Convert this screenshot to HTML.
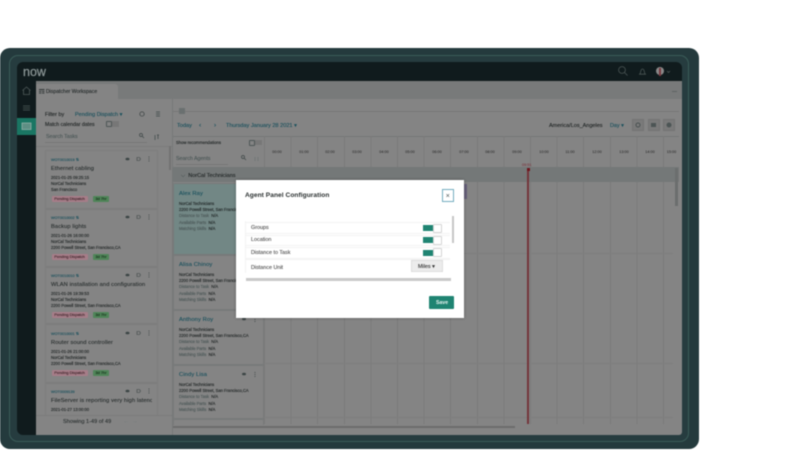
<!DOCTYPE html>
<html><head><meta charset="utf-8">
<style>
html,body{margin:0;padding:0;background:#fff;width:800px;height:450px;overflow:hidden;font-family:"Liberation Sans",sans-serif}
div,span,svg{position:absolute;white-space:nowrap}
#wrap{left:0;top:0;width:800px;height:450px;filter:blur(.4px)}
.t{line-height:8px;color:#1b2020;font-size:4.1px;margin-top:.6px;-webkit-text-stroke:.1px currentColor}
.h{font-size:5.700px;color:#262c2c;letter-spacing:.12px}
.w{font-size:3.800px;color:#174f5c}
.g{color:#4a5656}
.teal{color:#174f5c}
.tag{height:6px;line-height:6px;font-size:3.900px;text-align:center;border-radius:1px;-webkit-text-stroke:.1px currentColor}
.p{background:#a67d88;color:#3a2127}
.q{background:#4f8558;color:#122a16}
.c{left:45px;width:113px;background:#848484;border:1px solid #7d7d7d;box-sizing:border-box}
.a{left:173px;width:91px;border:1px solid #787a7a;box-sizing:border-box;background:#848484}
.n{font-size:5.800px;color:#174f5c;letter-spacing:.1px}
.box{background:#7a7a7a;border:1px solid #737373;box-sizing:border-box;width:12px;height:12px;top:119px}
.hr{font-size:3.800px;color:#222;top:148px;width:26px;text-align:center;line-height:8px}
.row{left:245px;width:205px;background:#fff;border-top:1px solid #f3f3f3;border-bottom:1px solid #f3f3f3;box-sizing:border-box}
.m{font-size:5.400px;color:#4a4a4a;line-height:8px;left:251px;-webkit-text-stroke:.08px currentColor}
.sw{left:423px;width:19px;height:9px}
</style></head>
<body>
<div id="wrap">
<div style="left:0;top:48px;width:699px;height:401px;background:#243a3d;border-radius:10px"></div>
<div style="left:8.500px;top:55px;width:680px;height:386.500px;border:1px solid #3a5c58;border-radius:9px;box-sizing:border-box;background:#263c3f"></div>
<div style="left:17px;top:62px;width:665px;height:373px;background:#101b1d;border-radius:6px"></div>
<div class="t" style="left:23px;top:65px;font-size:12.500px;line-height:12px;color:#8b9696;letter-spacing:0;-webkit-text-stroke:.25px #8b9696">now</div>

<!-- top icons -->
<svg style="left:617px;top:65px" width="60" height="13" fill="none" stroke="#4b5655" stroke-width=".8">
<circle cx="5" cy="5" r="3.400"/><path d="M7.500 7.500l3 3"/>
<path d="M22 9.200h7M23 9c.8-1 .3-5 2.500-5s1.700 4 2.500 5"/>
<circle cx="43" cy="6" r="4" fill="#8a8a8a" stroke="none"/><rect x="42" y="3" width="2" height="8" fill="#7a3a40" stroke="none"/>
<path d="M50 6l1.500 1.500L53 6"/></svg>

<!-- sidebar -->
<div style="left:17px;top:118px;width:19px;height:17px;background:#1a7663"></div>
<svg style="left:17px;top:82px" width="19" height="52" fill="none" stroke="#4f5b5a" stroke-width=".8">
<path d="M5.500 8.500L9.500 5l4 3.500M6.500 8v4.500h6V8"/>
<path d="M6 24h7M6 26h7M6 28h7" stroke="#3e4b49" stroke-width="1"/>
<rect x="5" y="41" width="9" height="6.500" stroke="#8fb0a8" fill="#5e8f84"/></svg>

<!-- content -->
<div style="left:36px;top:81px;width:646px;height:354px;background:#848484;border-radius:0 0 3px 0"></div>
<div style="left:36px;top:81px;width:646px;height:18px;background:#787a7a"></div>
<div style="left:36px;top:84px;width:82px;height:15px;background:#848484;border-radius:0 3px 0 0"></div>
<svg style="left:39px;top:89px" width="6" height="5" fill="#3a4040"><path d="M0 0h5.500v1.200H0zM0 2h2.300v1H0zM3 2h2.500v1H3zM0 3.600h2.300v1H0zM3 3.600h2.500v1H3z"/></svg>
<div class="t" style="left:46px;top:87px;font-size:5.100px;color:#222828">Dispatcher Workspace</div>
<div style="left:672px;top:90.500px;width:5px;height:1px;background:#5f6363"></div>

<!-- left panel -->
<div style="left:172px;top:99px;width:1px;height:336px;background:#767878"></div>
<div class="t" style="left:45px;top:110px;font-size:5.400px">Filter by</div>
<div class="t teal" style="left:75px;top:110px;font-size:5.500px">Pending Dispatch ▾</div>
<svg style="left:136px;top:110px" width="30" height="8" fill="none" stroke="#333b3b" stroke-width=".7">
<circle cx="6" cy="4" r="2.200"/><path d="M20 2h4M20 4h4M20 6h4" stroke="#4b5555" stroke-width=".9"/></svg>
<div class="t" style="left:45px;top:120.500px;font-size:5.200px">Match calendar dates</div>
<div style="left:106px;top:121px;width:13px;height:6px;background:#777;border-radius:1px"></div>
<div style="left:106px;top:120.500px;width:6px;height:6.500px;background:#848484;border:.7px solid #4e5656;box-sizing:border-box;border-radius:1px"></div>
<div class="t g" style="left:46px;top:132px;font-size:5.300px">Search Tasks</div>
<div style="left:45px;top:141.500px;width:102px;height:1px;background:#777"></div>
<svg style="left:138px;top:132px" width="24" height="10" fill="none" stroke="#3c4545" stroke-width=".7">
<circle cx="3" cy="3" r="1.500"/><path d="M4 4l2 2M17 3v5M20 3v4M19 3h2"/></svg>
<div style="left:36px;top:146px;width:136px;height:1px;background:#7b7b7b"></div>
<div style="left:169px;top:146px;width:2px;height:24px;background:#737373"></div>

<div class="c" style="top:150px;height:59px"></div>
<div class="t w" style="left:51px;top:155px">WOT0010019 <span style="position:static">⇅</span></div>
<div class="t h" style="left:51px;top:164px">Ethernet cabling</div>
<div class="t" style="left:51px;top:173px">2021-01-25 09:25:15</div>
<div class="t" style="left:51px;top:179px">NorCal Technicians</div>
<div class="t" style="left:51px;top:185.500px">San Francisco</div>
<div class="tag p" style="left:51.500px;top:196px;width:36px">Pending Dispatch</div>
<div class="tag q" style="left:93px;top:196px;width:16px">3d 7hr</div>

<div class="c" style="top:209px;height:58px"></div>
<div class="t w" style="left:51px;top:213px">WOT0010002 <span style="position:static">⇅</span></div>
<div class="t h" style="left:51px;top:222px">Backup lights</div>
<div class="t" style="left:51px;top:231px">2021-01-26 16:00:00</div>
<div class="t" style="left:51px;top:237px">NorCal Technicians</div>
<div class="t" style="left:51px;top:243.500px">2200 Powell Street, San Francisco,CA</div>
<div class="tag p" style="left:51.500px;top:254px;width:36px">Pending Dispatch</div>
<div class="tag q" style="left:93px;top:254px;width:16px">3d 7hr</div>

<div class="c" style="top:267px;height:57px"></div>
<div class="t w" style="left:51px;top:271px">WOT0010010 <span style="position:static">⇅</span></div>
<div class="t h" style="left:51px;top:280px">WLAN installation and configuration</div>
<div class="t" style="left:51px;top:289px">2021-01-26 19:39:53</div>
<div class="t" style="left:51px;top:295px">NorCal Technicians</div>
<div class="t" style="left:51px;top:301.500px">2200 Powell Street, San Francisco,CA</div>
<div class="tag p" style="left:51.500px;top:312px;width:36px">Pending Dispatch</div>
<div class="tag q" style="left:93px;top:312px;width:16px">3d 7hr</div>

<div class="c" style="top:324px;height:59px"></div>
<div class="t w" style="left:51px;top:329px">WOT0010001 <span style="position:static">⇅</span></div>
<div class="t h" style="left:51px;top:338px">Router sound controller</div>
<div class="t" style="left:51px;top:347px">2021-01-26 21:00:00</div>
<div class="t" style="left:51px;top:353px">NorCal Technicians</div>
<div class="t" style="left:51px;top:359.500px">2200 Powell Street, San Francisco,CA</div>
<div class="tag p" style="left:51.500px;top:370px;width:36px">Pending Dispatch</div>
<div class="tag q" style="left:93px;top:370px;width:16px">3d 7hr</div>

<div class="c" style="top:383px;height:32px;border-bottom:0"></div>
<div class="t w" style="left:51px;top:387px">WOT0009139</div>
<div class="t h" style="left:51px;top:396px;width:101px;overflow:hidden">FileServer is reporting very high latency</div>
<div class="t" style="left:51px;top:405px">2021-01-27 13:00:00</div>

<svg style="left:124px;top:154px" width="30" height="245" fill="#3c4545" stroke="none">
<g id="i"><ellipse cx="3.500" cy="5" rx="2" ry="1.300"/><path d="M13 3.500h2.500l1 1.500-1 1.500H13z" fill="none" stroke="#3c4545" stroke-width=".6"/><rect x="24.500" y="2.500" width=".9" height=".9"/><rect x="24.500" y="4.500" width=".9" height=".9"/><rect x="24.500" y="6.500" width=".9" height=".9"/></g>
<use href="#i" y="58"/><use href="#i" y="116"/><use href="#i" y="174"/><use href="#i" y="232"/></svg>

<div style="left:36px;top:415px;width:136px;height:20px;background:#848484;border-top:1px solid #7b7b7b;box-sizing:border-box"></div>
<div class="t" style="left:63px;top:417px;font-size:5.600px;color:#2a3030">Showing 1-49 of 49</div>
<div class="t" style="left:123px;top:417px;font-size:6.500px;color:#757b7b;-webkit-text-stroke:0">←&nbsp;→</div>

<!-- toolbar -->
<div style="left:173px;top:111px;width:506px;height:1px;background:#777"></div>
<div style="left:179px;top:108px;width:6px;height:6px;background:#6a7070"></div>
<div class="t teal" style="left:177px;top:121px;font-size:5.600px">Today</div>
<div class="t teal" style="left:199px;top:121px;font-size:6.500px">‹</div>
<div class="t teal" style="left:214px;top:121px;font-size:6.500px">›</div>
<div class="t teal" style="left:226px;top:121px;font-size:5.600px">Thursday January 28 2021 ▾</div>
<div class="t" style="left:549px;top:121px;font-size:5.500px">America/Los_Angeles</div>
<div class="t teal" style="left:610px;top:121px;font-size:5.400px">Day ▾</div>
<div class="box" style="left:632px"></div><div class="box" style="left:648px"></div><div class="box" style="left:663px"></div>
<svg style="left:632px;top:119px" width="44" height="12" fill="none" stroke="#3c4545" stroke-width=".8">
<circle cx="6" cy="6" r="2"/><rect x="19" y="4" width="5" height="4" fill="#4c5555" stroke="none"/><circle cx="37" cy="6" r="2.500" fill="#4c5555" stroke="none"/></svg>
<div style="left:173px;top:136px;width:506px;height:1px;background:#757777"></div>

<!-- agents head -->
<div class="t" style="left:176px;top:138px;font-size:4.200px">Show recommendations</div>
<div style="left:249px;top:140px;width:13px;height:5px;background:#777"></div>
<div style="left:249px;top:139.500px;width:6px;height:6px;background:#848484;border:.7px solid #4e5656;box-sizing:border-box;border-radius:1px"></div>
<div class="t g" style="left:176px;top:154px;font-size:5.300px">Search Agents</div>
<div style="left:176px;top:164px;width:52px;height:1px;background:#777"></div>
<svg style="left:240px;top:154px" width="22" height="9" fill="none" stroke="#3c4545" stroke-width=".7">
<circle cx="3" cy="3" r="1.500"/><path d="M4 4l2 2"/><path d="M15 3v4M18 3v4" stroke="#6b7272"/></svg>

<!-- timeline grid -->
<div style="left:264px;top:136px;width:415px;height:288px;background:repeating-linear-gradient(90deg,#7a7a7a 0,#7a7a7a 1px,transparent 1px,transparent 26.600px)"></div>
<div style="left:264px;top:253px;width:409px;height:1px;background:#7e7e7e"></div>
<div style="left:264px;top:363px;width:409px;height:1px;background:#7e7e7e"></div>
<div style="left:264px;top:417px;width:409px;height:1px;background:#7e7e7e"></div>

<div class="hr" style="left:264px">00:00</div><div class="hr" style="left:291px">01:00</div><div class="hr" style="left:317px">02:00</div><div class="hr" style="left:344px">03:00</div><div class="hr" style="left:371px">04:00</div><div class="hr" style="left:397px">05:00</div><div class="hr" style="left:424px">06:00</div><div class="hr" style="left:451px">07:00</div><div class="hr" style="left:477px">08:00</div><div class="hr" style="left:504px">09:00</div><div class="hr" style="left:531px">10:00</div><div class="hr" style="left:557px">11:00</div><div class="hr" style="left:584px">12:00</div><div class="hr" style="left:611px">13:00</div><div class="hr" style="left:637px">14:00</div><div class="hr" style="left:664px;width:15px;overflow:hidden">15:00</div>

<!-- group row -->
<div style="left:173px;top:167px;width:506px;height:15px;background:#747878"></div>
<div class="t" style="left:181px;top:171px;font-size:5.500px;color:#1d2222"><span style="position:static;color:#4a5555">⌵</span>&nbsp; NorCal Technicians</div>
<div style="left:675px;top:168px;width:3px;height:38px;background:#6b6e6e"></div>
<div class="t" style="left:522px;top:160px;font-size:3.800px;color:#7d3f47">09:51</div>
<div style="left:527.300px;top:168px;width:1.500px;height:256px;background:#74343a"></div>
<div style="left:526.500px;top:167.500px;width:3px;height:3px;background:#70141c"></div>
<div style="left:463.500px;top:184px;width:3px;height:15px;background:#67607a"></div>

<!-- agents -->
<div class="a" style="top:183px;height:72px;background:#728785"></div>
<div class="a" style="top:255px;height:55px"></div>
<div class="a" style="top:310px;height:55px"></div>
<div class="a" style="top:365px;height:54px"></div>
<div class="a" style="top:419px;height:6px;border-bottom:0"></div>

<div class="t n" style="left:179px;top:189px">Alex Ray</div>
<div class="t" style="left:179px;top:199px">NorCal Technicians</div>
<div class="t" style="left:179px;top:205.500px">2200 Powell Street, San Francisco,CA</div>
<div class="t" style="left:179px;top:211.500px"><span class="g" style="position:static">Distance to Task</span>&nbsp; N/A</div>
<div class="t" style="left:179px;top:218px"><span class="g" style="position:static">Available Parts</span>&nbsp; N/A</div>
<div class="t" style="left:179px;top:224px"><span class="g" style="position:static">Matching Skills</span>&nbsp; N/A</div>

<div class="t n" style="left:179px;top:260px">Alisa Chinoy</div>
<div class="t" style="left:179px;top:270px">NorCal Technicians</div>
<div class="t" style="left:179px;top:276.500px">2200 Powell Street, San Francisco,CA</div>
<div class="t" style="left:179px;top:282.500px"><span class="g" style="position:static">Distance to Task</span>&nbsp; N/A</div>
<div class="t" style="left:179px;top:289px"><span class="g" style="position:static">Available Parts</span>&nbsp; N/A</div>
<div class="t" style="left:179px;top:295px"><span class="g" style="position:static">Matching Skills</span>&nbsp; N/A</div>

<div class="t n" style="left:179px;top:315px">Anthony Roy</div>
<div class="t" style="left:179px;top:325px">NorCal Technicians</div>
<div class="t" style="left:179px;top:331.500px">2200 Powell Street, San Francisco,CA</div>
<div class="t" style="left:179px;top:337.500px"><span class="g" style="position:static">Distance to Task</span>&nbsp; N/A</div>
<div class="t" style="left:179px;top:344px"><span class="g" style="position:static">Available Parts</span>&nbsp; N/A</div>
<div class="t" style="left:179px;top:350px"><span class="g" style="position:static">Matching Skills</span>&nbsp; N/A</div>

<div class="t n" style="left:179px;top:370px">Cindy Lisa</div>
<div class="t" style="left:179px;top:380px">NorCal Technicians</div>
<div class="t" style="left:179px;top:386.500px">2200 Powell Street, San Francisco,CA</div>
<div class="t" style="left:179px;top:392.500px"><span class="g" style="position:static">Distance to Task</span>&nbsp; N/A</div>
<div class="t" style="left:179px;top:399px"><span class="g" style="position:static">Available Parts</span>&nbsp; N/A</div>
<div class="t" style="left:179px;top:405px"><span class="g" style="position:static">Matching Skills</span>&nbsp; N/A</div>

<svg style="left:240px;top:314px" width="18" height="70" fill="#3c4545">
<ellipse cx="4" cy="5" rx="2" ry="1.300"/><rect x="14.500" y="3" width=".9" height=".9"/><rect x="14.500" y="5" width=".9" height=".9"/><rect x="14.500" y="7" width=".9" height=".9"/>
<ellipse cx="4" cy="60" rx="2" ry="1.300"/><rect x="14.500" y="58" width=".9" height=".9"/><rect x="14.500" y="60" width=".9" height=".9"/><rect x="14.500" y="62" width=".9" height=".9"/></svg>

<div style="left:173px;top:426px;width:342px;height:2px;background:#6c6c6c"></div>

<!-- modal -->
<div style="left:236px;top:180px;width:227.500px;height:138px;background:#fff;box-shadow:0 0 3px rgba(0,0,0,.3)"></div>
<div class="t" style="left:245px;top:191.500px;font-size:6.600px;font-weight:bold;color:#2a3030;letter-spacing:.05px;-webkit-text-stroke:0">Agent Panel Configuration</div>
<div style="left:442px;top:189px;width:12px;height:12.500px;border:1px solid #74adc0;box-sizing:border-box;background:#fff"></div>
<div class="t" style="left:445.800px;top:192px;font-size:7px;color:#4a5555;-webkit-text-stroke:0">×</div>

<div class="row" style="top:221.500px;height:12px"></div>
<div class="row" style="top:234.500px;height:11.500px"></div>
<div class="row" style="top:246.500px;height:12px"></div>
<div class="row" style="top:259px;height:14px;border-bottom:0"></div>
<div style="left:245px;top:221px;width:1px;height:52px;background:#f3f3f3"></div>
<div class="m" style="top:224px">Groups</div>
<div class="m" style="top:236px">Location</div>
<div class="m" style="top:249px">Distance to Task</div>
<div class="m" style="top:263.500px">Distance Unit</div>

<div class="sw" style="top:223.500px"><div style="left:0;top:1.500px;width:10px;height:6px;background:#1f8472"></div><div style="left:9.500px;top:0;width:9.500px;height:9px;background:#fff;border:.7px solid #d5d5d5;box-sizing:border-box;border-radius:1px"></div></div>
<div class="sw" style="top:235.800px"><div style="left:0;top:1.500px;width:10px;height:6px;background:#1f8472"></div><div style="left:9.500px;top:0;width:9.500px;height:9px;background:#fff;border:.7px solid #d5d5d5;box-sizing:border-box;border-radius:1px"></div></div>
<div class="sw" style="top:248px"><div style="left:0;top:1.500px;width:10px;height:6px;background:#1f8472"></div><div style="left:9.500px;top:0;width:9.500px;height:9px;background:#fff;border:.7px solid #d5d5d5;box-sizing:border-box;border-radius:1px"></div></div>

<div style="left:411px;top:260px;width:32px;height:12px;background:#ececec;border:.7px solid #ddd;box-sizing:border-box"></div>
<div class="t" style="left:418px;top:262.500px;font-size:5.400px;color:#333">Miles ▾</div>
<div style="left:451.500px;top:216px;width:2px;height:27px;background:#c6c6c6"></div>
<div style="left:246px;top:277.500px;width:205px;height:3px;background:#c9c9c9"></div>
<div style="left:429px;top:296px;width:25px;height:13px;background:#1f8472;border-radius:1px"></div>
<div class="t" style="left:436px;top:298.500px;font-size:5.200px;font-weight:bold;color:#e6f2ef;-webkit-text-stroke:0">Save</div>
</div>
</body></html>
